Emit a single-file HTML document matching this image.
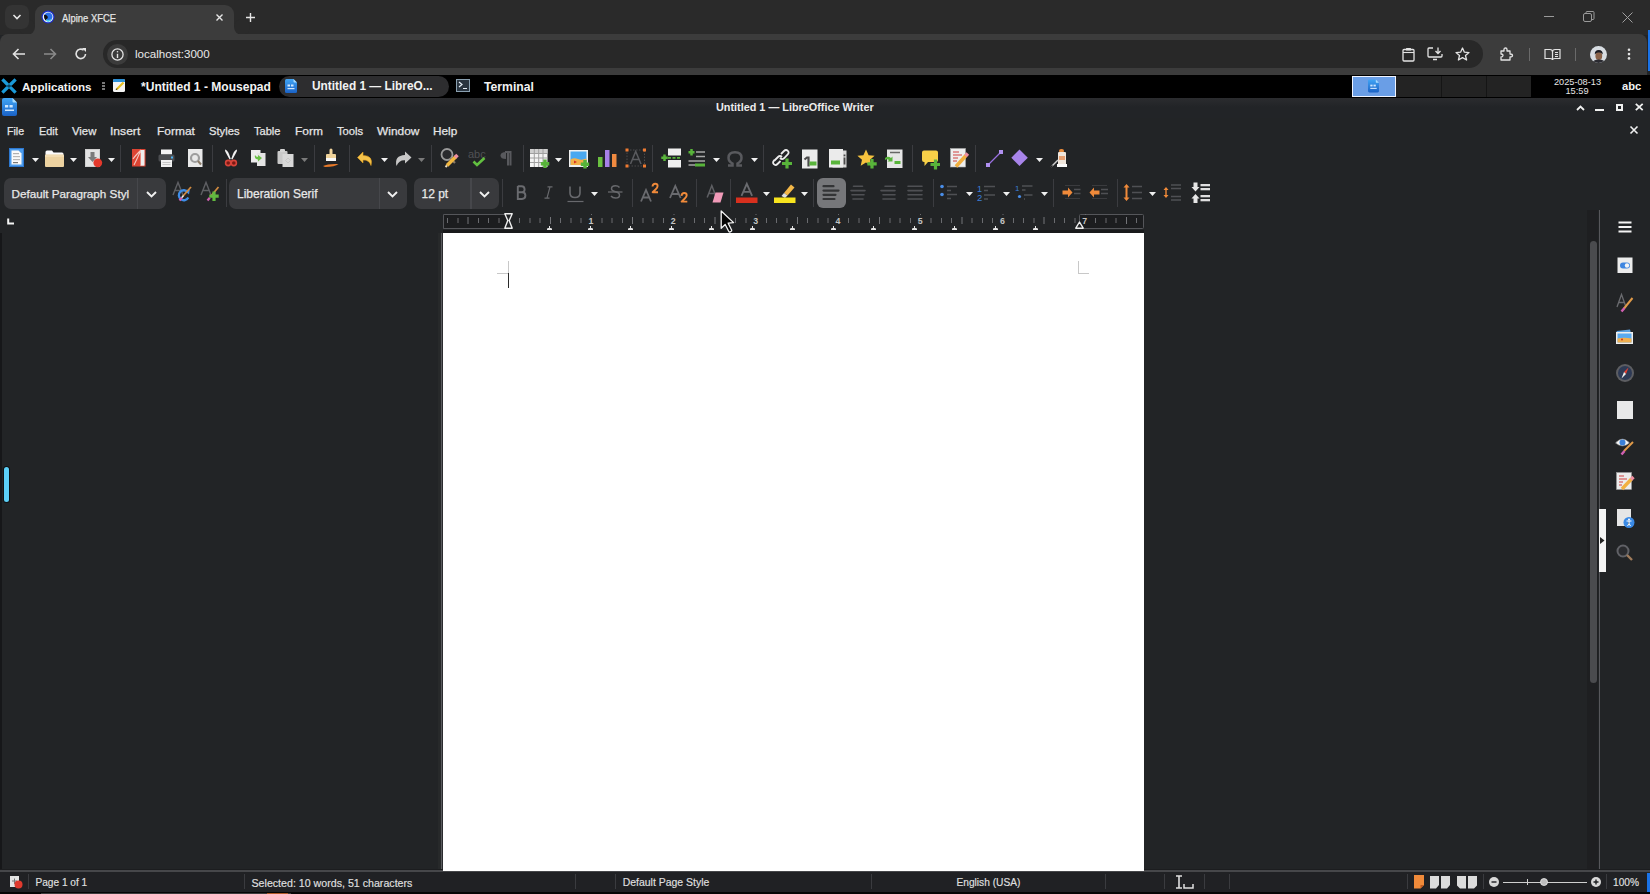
<!DOCTYPE html>
<html><head><meta charset="utf-8">
<style>
*{margin:0;padding:0;box-sizing:border-box}
html,body{width:1650px;height:894px;overflow:hidden;background:#222426;font-family:"Liberation Sans",sans-serif;position:relative}
.a{position:absolute}
.t{position:absolute;white-space:nowrap;line-height:1}
svg{position:absolute;overflow:visible}
</style></head><body>
<!-- ===== Chrome tab strip ===== -->
<div class="a" style="left:0;top:0;width:1650px;height:35px;background:#2a2a2a"></div>
<!-- active tab -->
<div class="a" style="left:35px;top:5px;width:199px;height:32px;border-radius:9px 9px 0 0;background:#3c3c3c"></div>
<div class="a" style="left:27px;top:27px;width:8px;height:8px;background:#3c3c3c"></div>
<div class="a" style="left:19px;top:19px;width:16px;height:16px;border-radius:50%;background:#2a2a2a"></div>
<div class="a" style="left:234px;top:27px;width:8px;height:8px;background:#3c3c3c"></div>
<div class="a" style="left:234px;top:19px;width:16px;height:16px;border-radius:50%;background:#2a2a2a"></div>
<div class="a" style="left:5px;top:5px;width:24px;height:24px;border-radius:7px;background:#343434"></div>
<svg style="left:12px;top:13px" width="10" height="8"><path d="M1.5 2 L5 5.5 L8.5 2" stroke="#e6e6e6" stroke-width="1.6" fill="none"/></svg>
<!-- favicon -->
<svg style="left:41px;top:10px" width="14" height="14"><circle cx="7" cy="7" r="6.5" fill="#1a30d0"/><circle cx="7" cy="7" r="5.3" fill="#f4f4f4"/><circle cx="7.3" cy="6.8" r="4.2" fill="#2a70e8"/><path d="M3 5 Q5 4 7 7 Q6 10 4.5 10.5 Q2.8 8 3 5 Z" fill="#111"/><path d="M5 9 Q8 11 11 8.5 Q10 11.5 7 12 Q5 11.5 5 9 Z" fill="#4ad0f0"/></svg>
<div class="t" style="left:62px;top:13px;font-size:11px;color:#e3e3e3;transform:scaleX(0.86);transform-origin:left;-webkit-text-stroke:0.25px #e3e3e3">Alpine XFCE</div>
<svg style="left:216px;top:14px" width="7" height="7"><path d="M0.5 0.5 L6.5 6.5 M6.5 0.5 L0.5 6.5" stroke="#e6e6e6" stroke-width="1.4"/></svg>
<svg style="left:246px;top:13px" width="9" height="9"><path d="M4.5 0 V9 M0 4.5 H9" stroke="#e6e6e6" stroke-width="1.4"/></svg>
<!-- window controls -->
<div class="a" style="left:1544px;top:16px;width:10px;height:1px;background:#9a9a9a"></div>
<svg style="left:1583px;top:11px" width="12" height="12"><rect x="0.5" y="2.5" width="8" height="8" rx="1.5" stroke="#9a9a9a" fill="none"/><path d="M3 2.5 V1.5 Q3 0.5 4 0.5 H10 Q11 0.5 11 1.5 V7.5 Q11 8.5 10 8.5 H9" stroke="#9a9a9a" fill="none"/></svg>
<svg style="left:1622px;top:12px" width="11" height="11"><path d="M0.5 0.5 L10.5 10.5 M10.5 0.5 L0.5 10.5" stroke="#a0a0a0" stroke-width="1"/></svg>
<!-- ===== Chrome toolbar ===== -->
<div class="a" style="left:0;top:34px;width:1647px;height:41px;background:#3c3c3c;border-radius:8px 8px 0 0"></div>
<div class="a" style="left:1648px;top:30px;width:2px;height:41px;background:#1a73e8"></div>
<svg style="left:12px;top:48px" width="14" height="12"><path d="M13 6 H1.5 M6.5 1 L1.5 6 L6.5 11" stroke="#e3e3e3" stroke-width="1.6" fill="none"/></svg>
<svg style="left:43px;top:48px" width="14" height="12"><path d="M1 6 H12.5 M7.5 1 L12.5 6 L7.5 11" stroke="#8a8a8a" stroke-width="1.6" fill="none"/></svg>
<svg style="left:74px;top:47px" width="14" height="14"><path d="M11.5 7 A4.7 4.7 0 1 1 9.6 3.1" stroke="#e3e3e3" stroke-width="1.6" fill="none"/><path d="M8 1 L12 1 L12 5 Z" fill="#e3e3e3"/></svg>
<!-- omnibox -->
<div class="a" style="left:103px;top:40px;width:1380px;height:28px;border-radius:14px;background:#282828"></div>
<div class="a" style="left:107px;top:44px;width:21px;height:21px;border-radius:50%;background:#3b3b3b"></div>
<svg style="left:111px;top:48px" width="13" height="13"><circle cx="6.5" cy="6.5" r="5.6" stroke="#e3e3e3" stroke-width="1.3" fill="none"/><path d="M6.5 5.8 V10" stroke="#e3e3e3" stroke-width="1.4"/><circle cx="6.5" cy="3.8" r="0.8" fill="#e3e3e3"/></svg>
<div class="t" style="left:135px;top:48px;font-size:11.6px;color:#e8e8e8">localhost:3000</div>
<!-- right icons -->
<svg style="left:1401.5px;top:47px" width="14" height="15"><rect x="1" y="2.5" width="11" height="11.5" rx="1" stroke="#e3e3e3" stroke-width="1.3" fill="none"/><rect x="4" y="1" width="5" height="2.5" rx="0.5" fill="#e3e3e3"/><path d="M1 5.5 H12" stroke="#e3e3e3" stroke-width="1.1"/></svg>
<svg style="left:1427px;top:47px" width="16" height="14"><path d="M6 1 H2 Q1 1 1 2 V9 Q1 10 2 10 H14 Q15 10 15 9 V7" stroke="#e3e3e3" stroke-width="1.3" fill="none"/><path d="M11 0.5 V6 M8.5 4 L11 6.5 L13.5 4" stroke="#e3e3e3" stroke-width="1.3" fill="none"/><path d="M6 12.5 H10" stroke="#e3e3e3" stroke-width="1.5"/></svg>
<svg style="left:1455px;top:47px" width="15" height="14"><path d="M7.5 1 L9.4 5.2 L14 5.6 L10.5 8.6 L11.6 13 L7.5 10.6 L3.4 13 L4.5 8.6 L1 5.6 L5.6 5.2 Z" stroke="#e3e3e3" stroke-width="1.3" fill="none" stroke-linejoin="round"/></svg>
<svg style="left:1499px;top:47px" width="15" height="15"><path d="M2 4 H5 V2.5 Q5 1 6.5 1 Q8 1 8 2.5 V4 H11 V7 Q13.5 7 13.5 8.5 Q13.5 10 11 10 V13 H2 V10 Q4 10 4 8.5 Q4 7 2 7 Z" stroke="#e3e3e3" stroke-width="1.3" fill="none" stroke-linejoin="round"/></svg>
<div class="a" style="left:1529px;top:48px;width:1px;height:13px;background:#6a6a6a"></div>
<svg style="left:1544px;top:48px" width="17" height="13"><path d="M1 1.5 H6 Q8.5 1.5 8.5 4 V12 Q8.5 10.5 6 10.5 H1 Z M16 1.5 H11 Q8.5 1.5 8.5 4 V12 Q8.5 10.5 11 10.5 H16 Z" stroke="#e3e3e3" stroke-width="1.2" fill="none"/><path d="M11 4.5 H14 M11 6.5 H14 M11 8.5 H14" stroke="#e3e3e3" stroke-width="1"/></svg>
<div class="a" style="left:1575px;top:48px;width:1px;height:13px;background:#6a6a6a"></div>
<svg style="left:1590px;top:46px" width="17" height="17"><defs><clipPath id="av"><circle cx="8.5" cy="8.5" r="8.5"/></clipPath></defs><g clip-path="url(#av)"><rect width="17" height="17" fill="#d8dde2"/><ellipse cx="8.8" cy="10" rx="3.4" ry="4.1" fill="#8a6248"/><path d="M4.8 8.5 Q4.5 4 8.8 4 Q13 4 12.7 8.5 Q11 6.2 8.8 6.5 Q6.5 6.2 4.8 8.5 Z" fill="#1c1c22"/><path d="M2 17 Q3 13.5 8.8 13.5 Q14.5 13.5 15.5 17 Z" fill="#2a2a30"/></g></svg>
<svg style="left:1627.3px;top:48px" width="4" height="14"><circle cx="2" cy="1.8" r="1.3" fill="#e3e3e3"/><circle cx="2" cy="6.1" r="1.3" fill="#e3e3e3"/><circle cx="2" cy="10.4" r="1.3" fill="#e3e3e3"/></svg>
<!-- ===== XFCE panel ===== -->
<div class="a" style="left:0;top:75px;width:1650px;height:23px;background:#000"></div>
<svg style="left:2px;top:79px" width="14" height="14"><path d="M1.5 1.5 L5 5 M12.5 1.5 L9 5 M1.5 12.5 L5 9 M12.5 12.5 L9 9" stroke="#1b9ad8" stroke-width="3.2" stroke-linecap="square"/><path d="M4 7 H10" stroke="#0d5b85" stroke-width="1.5"/></svg>
<div class="t" style="left:22px;top:80.5px;font-size:11.6px;font-weight:700;color:#f2f2f2">Applications</div>
<div class="a" style="left:102px;top:82px;width:3px;height:2px;background:#777"></div>
<div class="a" style="left:102px;top:85px;width:3px;height:2px;background:#777"></div>
<div class="a" style="left:102px;top:88px;width:3px;height:2px;background:#777"></div>
<div class="a" style="left:113px;top:79px;width:12px;height:13px;border-radius:1.5px;background:#f4f4f4"></div>
<div class="a" style="left:113px;top:79px;width:12px;height:3px;border-radius:1.5px 1.5px 0 0;background:#2a90d8"></div>
<svg style="left:115px;top:81px" width="10" height="10"><path d="M1.5 8.5 L8.5 1.5" stroke="#e8c020" stroke-width="2.2"/><path d="M1 9 L2 7.5" stroke="#333" stroke-width="1"/></svg>
<div class="t" style="left:141px;top:80.5px;font-size:12.05px;font-weight:700;color:#f2f2f2">*Untitled 1 - Mousepad</div>
<div class="a" style="left:279px;top:76px;width:170px;height:21px;border-radius:10.5px;background:#2d2d2f"></div>
<svg style="left:285px;top:79px" width="12" height="14" viewBox="0 0 12 14"><defs><linearGradient id="ga" x1="0" y1="0" x2="0" y2="1"><stop offset="0" stop-color="#41a5f5"/><stop offset="1" stop-color="#1a62c6"/></linearGradient></defs><path d="M1.5 0 H8.5 L12 3.5 V12.5 Q12 14 10.5 14 H1.5 Q0 14 0 12.5 V1.5 Q0 0 1.5 0 Z" fill="url(#ga)"/><path d="M8.5 0 L12 3.5 H9.5 Q8.5 3.5 8.5 2.5 Z" fill="#a8dcff"/><rect x="2.5" y="5.5" width="2.5" height="2" fill="#cfe8ff"/><rect x="6" y="5.5" width="2.5" height="2" fill="#cfe8ff"/><rect x="2.5" y="9" width="7" height="1.2" fill="#cfe8ff"/></svg>
<div class="t" style="left:312px;top:80.5px;font-size:11.86px;font-weight:700;color:#f2f2f2">Untitled 1 — LibreO...</div>
<div class="a" style="left:456px;top:79px;width:14px;height:13px;background:#2a3540;border:1px solid #8aa0b0"></div>
<svg style="left:458px;top:81px" width="10" height="9"><path d="M1 1 L4 3.5 L1 6 M5 7.5 H9" stroke="#e8f0f8" stroke-width="1.2" fill="none"/></svg>
<div class="t" style="left:484px;top:80.5px;font-size:12.2px;font-weight:700;color:#f2f2f2">Terminal</div>
<!-- pager -->
<div class="a" style="left:1352px;top:76px;width:44px;height:21px;background:#6a9ee6;border:1px solid #f0f4ff"></div>
<svg style="left:1368px;top:79px" width="11" height="14" viewBox="0 0 12 14"><defs><linearGradient id="gb" x1="0" y1="0" x2="0" y2="1"><stop offset="0" stop-color="#41a5f5"/><stop offset="1" stop-color="#1a62c6"/></linearGradient></defs><path d="M1.5 0 H8.5 L12 3.5 V12.5 Q12 14 10.5 14 H1.5 Q0 14 0 12.5 V1.5 Q0 0 1.5 0 Z" fill="url(#gb)"/><path d="M8.5 0 L12 3.5 H9.5 Q8.5 3.5 8.5 2.5 Z" fill="#a8dcff"/><rect x="2.5" y="5.5" width="2.5" height="2" fill="#cfe8ff"/><rect x="6" y="5.5" width="2.5" height="2" fill="#cfe8ff"/><rect x="2.5" y="9" width="7" height="1.2" fill="#cfe8ff"/></svg>
<div class="a" style="left:1396px;top:76px;width:135px;height:21px;background:#232323"></div>
<div class="a" style="left:1441px;top:76px;width:1px;height:21px;background:#151515"></div>
<div class="a" style="left:1486px;top:76px;width:1px;height:21px;background:#151515"></div>
<div class="t" style="left:1554px;top:77.5px;font-size:9.2px;color:#e6e6e6;text-align:center;width:46px;line-height:9.5px">2025-08-13<br>15:59</div>
<div class="t" style="left:1622px;top:81px;font-size:11.2px;font-weight:700;color:#f2f2f2">abc</div><div class="a" style="left:0px;top:98px;width:1650px;height:20px;background:linear-gradient(#2b2c2f,#222427 9px);"></div>
<div class="t" style="left:716px;top:102px;font-size:10.85px;font-weight:700;color:#ececec;">Untitled 1 — LibreOffice Writer</div>
<svg style="left:2px;top:98px" width="15" height="18" viewBox="0 0 15 18"><defs><linearGradient id="gt" x1="0" y1="0" x2="0" y2="1"><stop offset="0" stop-color="#41a5f5"/><stop offset="1" stop-color="#1a62c6"/></linearGradient></defs><path d="M2 0 H10.5 L15 4.5 V16 Q15 18 13 18 H2 Q0 18 0 16 V2 Q0 0 2 0 Z" fill="url(#gt)"/><path d="M10.5 0 L15 4.5 H11.5 Q10.5 4.5 10.5 3.5 Z" fill="#a8dcff"/><rect x="3" y="7" width="3.2" height="2.5" fill="#cfe8ff"/><rect x="7.5" y="7" width="3.2" height="2.5" fill="#cfe8ff"/><rect x="3" y="11.5" width="9" height="1.5" fill="#cfe8ff"/></svg>
<svg style="left:1575.5px;top:104.5px" width="9" height="6" viewBox="0 0 9 6"><path d="M1 5 L4.5 1.5 L8 5" stroke="#f0f0f0" stroke-width="1.8" fill="none"/></svg>
<div class="a" style="left:1595px;top:109px;width:9px;height:2px;background:#f0f0f0;"></div>
<svg style="left:1616px;top:104px" width="7" height="7" viewBox="0 0 7 7"><rect x="1" y="1" width="5" height="5" stroke="#f0f0f0" stroke-width="2" fill="none"/></svg>
<svg style="left:1635px;top:103px" width="8.5" height="8" viewBox="0 0 8.5 8"><path d="M0.8 0.8 L7.7 7.2 M7.7 0.8 L0.8 7.2" stroke="#f0f0f0" stroke-width="1.8"/></svg>
<div class="t" style="left:7.1px;top:126px;font-size:11.8px;font-weight:400;color:#e6e6e6;transform:scaleX(0.898);transform-origin:left;-webkit-text-stroke:0.25px #e6e6e6">File</div>
<div class="t" style="left:39px;top:126px;font-size:11.8px;font-weight:400;color:#e6e6e6;transform:scaleX(0.924);transform-origin:left;-webkit-text-stroke:0.25px #e6e6e6">Edit</div>
<div class="t" style="left:72px;top:126px;font-size:11.8px;font-weight:400;color:#e6e6e6;transform:scaleX(0.958);transform-origin:left;-webkit-text-stroke:0.25px #e6e6e6">View</div>
<div class="t" style="left:110.2px;top:126px;font-size:11.8px;font-weight:400;color:#e6e6e6;transform:scaleX(1.025);transform-origin:left;-webkit-text-stroke:0.25px #e6e6e6">Insert</div>
<div class="t" style="left:156.7px;top:126px;font-size:11.8px;font-weight:400;color:#e6e6e6;transform:scaleX(1.014);transform-origin:left;-webkit-text-stroke:0.25px #e6e6e6">Format</div>
<div class="t" style="left:208.8px;top:126px;font-size:11.8px;font-weight:400;color:#e6e6e6;transform:scaleX(0.949);transform-origin:left;-webkit-text-stroke:0.25px #e6e6e6">Styles</div>
<div class="t" style="left:253.5px;top:126px;font-size:11.8px;font-weight:400;color:#e6e6e6;transform:scaleX(0.939);transform-origin:left;-webkit-text-stroke:0.25px #e6e6e6">Table</div>
<div class="t" style="left:294.8px;top:126px;font-size:11.8px;font-weight:400;color:#e6e6e6;transform:scaleX(1.014);transform-origin:left;-webkit-text-stroke:0.25px #e6e6e6">Form</div>
<div class="t" style="left:337px;top:126px;font-size:11.8px;font-weight:400;color:#e6e6e6;transform:scaleX(0.951);transform-origin:left;-webkit-text-stroke:0.25px #e6e6e6">Tools</div>
<div class="t" style="left:376.9px;top:126px;font-size:11.8px;font-weight:400;color:#e6e6e6;transform:scaleX(1.010);transform-origin:left;-webkit-text-stroke:0.25px #e6e6e6">Window</div>
<div class="t" style="left:433px;top:126px;font-size:11.8px;font-weight:400;color:#e6e6e6;transform:scaleX(0.997);transform-origin:left;-webkit-text-stroke:0.25px #e6e6e6">Help</div>
<svg style="left:1630px;top:126px" width="8" height="8" viewBox="0 0 8 8"><path d="M0.5 0.5 L7.5 7.5 M7.5 0.5 L0.5 7.5" stroke="#f0f0f0" stroke-width="1.6"/></svg>
<svg style="left:9px;top:148px" width="15" height="19" viewBox="0 0 15 19"><rect x="0.5" y="0.5" width="14" height="18" fill="#4d9cec" stroke="#2d78d0"/><path d="M2.5 2.5 H9.5 L12.5 5.5 V16.5 H2.5 Z" fill="#fafafa"/><rect x="4" y="5" width="6" height="1.2" fill="#b0b0b0"/><rect x="4" y="8" width="7" height="1.2" fill="#b8b8b8"/><rect x="4" y="11" width="7" height="1.2" fill="#b8b8b8"/><rect x="4" y="14" width="5" height="1.2" fill="#777"/></svg>
<svg style="left:32.3px;top:157.5px" width="7" height="4" viewBox="0 0 7 4"><path d="M0 0 H7 L3.5 4 Z" fill="#f0f0f0"/></svg>
<svg style="left:45px;top:150px" width="19" height="17" viewBox="0 0 19 17"><path d="M0.5 2 Q0.5 0.5 2 0.5 H7 L8.5 2.5 H17 Q18.5 2.5 18.5 4 V6 H0.5 Z" fill="#fbfbfb"/><rect x="0" y="4.5" width="19" height="12.5" rx="1" fill="#ecd2a0"/><path d="M0 6 H19" stroke="#f7e6c4" stroke-width="1"/></svg>
<svg style="left:69.8px;top:157.5px" width="7" height="4" viewBox="0 0 7 4"><path d="M0 0 H7 L3.5 4 Z" fill="#f0f0f0"/></svg>
<svg style="left:84.5px;top:149px" width="18" height="19" viewBox="0 0 18 19"><rect x="0" y="0" width="15" height="18" fill="#e3e3e3"/><rect x="0.5" y="0.5" width="14" height="17" fill="none" stroke="#cfcfcf"/><path d="M5.5 3 H9.5 V8 H12 L7.5 13 L3 8 H5.5 Z" fill="#7b7b7b"/><circle cx="12.8" cy="13.8" r="4.4" fill="#e3392c"/></svg>
<svg style="left:107.6px;top:157.5px" width="7" height="4" viewBox="0 0 7 4"><path d="M0 0 H7 L3.5 4 Z" fill="#f0f0f0"/></svg>
<div class="a" style="left:120px;top:145px;width:1px;height:27px;background:#3b3c40;"></div>
<svg style="left:131.5px;top:149px" width="14" height="18" viewBox="0 0 14 18"><rect x="0" y="0" width="13.5" height="17.5" fill="#dc4433"/><path d="M9 1 Q3 7 1 10 M9 1 Q5 10 2 16 M9 1 V17 M11 1 V17" stroke="#f4c7c0" stroke-width="1.1" fill="none"/><rect x="9" y="1" width="3.5" height="15.5" fill="#eeeeee"/></svg>
<svg style="left:158px;top:149px" width="17" height="19" viewBox="0 0 17 19"><rect x="3" y="0.5" width="11" height="5" fill="#f4f4f4"/><rect x="0.5" y="5.5" width="16" height="7" rx="1.5" fill="#4b4d50"/><rect x="13" y="7.5" width="2" height="2" fill="#4ab0f0"/><rect x="3" y="11" width="11" height="7" fill="#f2f2f2"/><path d="M4.5 13.5 H12.5 M4.5 15.5 H12.5" stroke="#bbb" stroke-width="0.8"/></svg>
<svg style="left:187.5px;top:149px" width="15" height="19" viewBox="0 0 15 19"><rect x="0" y="0" width="14.5" height="18" fill="#e9e9e9"/><circle cx="7" cy="9" r="4" fill="none" stroke="#9e9e9e" stroke-width="2.2"/><path d="M10 12 L13 15.5" stroke="#8a7a66" stroke-width="2"/></svg>
<div class="a" style="left:212px;top:145px;width:1px;height:27px;background:#3b3c40;"></div>
<svg style="left:223.5px;top:148px" width="14" height="20" viewBox="0 0 14 20"><path d="M1 1.5 Q3.5 2 5 6 L6.8 11 L5.6 11.5 L2 5 Q0.8 3 1 1.5 Z M13 1.5 Q10.5 2 9 6 L7.2 11 L8.4 11.5 L12 5 Q13.2 3 13 1.5 Z" fill="#f2f2f2"/><circle cx="4.2" cy="15" r="2.6" fill="#7a1a14" stroke="#d8443a" stroke-width="1.6"/><circle cx="9.8" cy="15" r="2.6" fill="#7a1a14" stroke="#d8443a" stroke-width="1.6"/></svg>
<svg style="left:251px;top:150px" width="15" height="17" viewBox="0 0 15 17"><rect x="0" y="0" width="9.5" height="12.5" fill="#ececec"/><rect x="6" y="3" width="8.5" height="13" fill="#e4e4e4"/><path d="M4 5 Q3 9 7 9.5 V11.5 L11 8 L7 5 V7 Q5 7 4 5 Z" fill="#6ac046"/></svg>
<svg style="left:277px;top:148px" width="17" height="20" viewBox="0 0 17 20"><rect x="0.5" y="3" width="10" height="13" rx="1" fill="#c9c9c9"/><rect x="3" y="1" width="5" height="3" rx="1" fill="#d4d4d4"/><rect x="5.5" y="6" width="11" height="13" fill="#d8d8d8"/><path d="M8.5 12.5 L11 10 L13.5 12.5 L11 15 Z" fill="none" stroke="#c4c4c4" stroke-width="0.8"/></svg>
<svg style="left:301.0px;top:157.5px" width="7" height="4" viewBox="0 0 7 4"><path d="M0 0 H7 L3.5 4 Z" fill="#7a7a7a"/></svg>
<div class="a" style="left:314px;top:145px;width:1px;height:27px;background:#3b3c40;"></div>
<svg style="left:322px;top:148px" width="18" height="20" viewBox="0 0 18 20"><rect x="7.5" y="0.5" width="3" height="7" rx="1.5" fill="#f0d49c"/><rect x="4" y="6" width="10" height="5" rx="1" fill="#efd39a"/><rect x="4" y="10" width="10" height="3" fill="#fafafa"/><path d="M1 18 Q6 15.5 16.5 16 Q13 19 3 19 Z" fill="#e87a2a"/></svg>
<div class="a" style="left:349px;top:145px;width:1px;height:27px;background:#3b3c40;"></div>
<svg style="left:356.5px;top:150.5px" width="17" height="17" viewBox="0 0 17 17"><path d="M6 1 L0.5 6.5 L6 12 V9 Q12 8.5 14 14.5 Q16.5 4.5 6 4.5 Z" fill="#f4c24a" stroke="#e0a020" stroke-width="0.6" stroke-linejoin="round"/></svg>
<svg style="left:380.5px;top:157.5px" width="7" height="4" viewBox="0 0 7 4"><path d="M0 0 H7 L3.5 4 Z" fill="#f0f0f0"/></svg>
<svg style="left:394px;top:150.5px" width="18" height="17" viewBox="0 0 18 17"><path d="M11 0.5 L17.5 6.5 L11 12.5 V9.2 Q5 8.8 2.5 15 Q0 4.5 11 4 Z" fill="#c8c8c8" stroke-linejoin="round"/></svg>
<svg style="left:418.3px;top:157.5px" width="7" height="4" viewBox="0 0 7 4"><path d="M0 0 H7 L3.5 4 Z" fill="#7a7a7a"/></svg>
<div class="a" style="left:431px;top:145px;width:1px;height:27px;background:#3b3c40;"></div>
<svg style="left:440px;top:148px" width="21" height="20" viewBox="0 0 21 20"><circle cx="7" cy="6.5" r="5.5" fill="#2a2b2e" stroke="#9a9a9a" stroke-width="1.8"/><path d="M10 10 L15 15" stroke="#8a7a66" stroke-width="2.2"/><path d="M7 17.5 L16 8.5" stroke="#f2b840" stroke-width="3.5"/><path d="M15 9.5 L17.5 7" stroke="#ee8fa0" stroke-width="3.5"/><path d="M5.5 19 L7 17.5" stroke="#f4e0c0" stroke-width="2"/></svg>
<svg style="left:468px;top:149px" width="20" height="18" viewBox="0 0 20 18"><text x="0" y="9" font-family="Liberation Sans" font-size="11" fill="#505155">abc</text><path d="M5.5 12.5 L9 16 L16.5 9" stroke="#62c040" stroke-width="2.6" fill="none"/></svg>
<svg style="left:500px;top:151px" width="11" height="15" viewBox="0 0 11 15"><path d="M5 1 H10.5 V14.5 M8 1 V14.5" stroke="#58595d" stroke-width="2" fill="none"/><path d="M6 1 Q0.5 1 0.5 4.5 Q0.5 8 6 8 Z" fill="#58595d"/></svg>
<div class="a" style="left:523px;top:145px;width:1px;height:27px;background:#3b3c40;"></div>
<svg style="left:530px;top:149px" width="20" height="19" viewBox="0 0 20 19"><rect x="0" y="0" width="17.5" height="18" fill="#f4f4f4"/><rect x="0" y="0" width="17.5" height="4" fill="#cfcfcf"/><path d="M0 4.5 H17.5 M0 9 H17.5 M0 13.5 H17.5 M4.3 0 V18 M8.7 0 V18 M13 0 V18" stroke="#a0a0a0" stroke-width="1"/><path d="M15 10.5 V19 M10.8 14.7 H19.3" stroke="#58b43a" stroke-width="3.4"/></svg>
<svg style="left:554.9px;top:157.5px" width="7" height="4" viewBox="0 0 7 4"><path d="M0 0 H7 L3.5 4 Z" fill="#f0f0f0"/></svg>
<svg style="left:569px;top:149.5px" width="21" height="19" viewBox="0 0 21 19"><rect x="0" y="0" width="19" height="17" fill="#f0f0f0"/><rect x="1.5" y="1.5" width="16" height="13.5" fill="#4aa8f0"/><path d="M1.5 9.5 Q5 7.5 9 9 Q13 10.5 17.5 8.5 V15 H1.5 Z" fill="#f4b048"/><path d="M5 10.5 L8 12 L5 13.5 Z" fill="#d83020"/><path d="M16 10 V18.5 M11.8 14.2 H20.2" stroke="#58b43a" stroke-width="3.4"/></svg>
<svg style="left:597.5px;top:149px" width="19" height="18" viewBox="0 0 19 18"><rect x="0" y="8" width="4.5" height="10" fill="#6ac040"/><rect x="7" y="1" width="4.5" height="17" fill="#a680e8"/><rect x="14" y="5" width="4.5" height="13" fill="#f08a40"/></svg>
<svg style="left:624.5px;top:148px" width="22" height="20" viewBox="0 0 22 20"><rect x="2" y="2" width="17.5" height="16" fill="none" stroke="#555" stroke-width="0.8" stroke-dasharray="1.5 1.5"/><rect x="0.5" y="0.5" width="3" height="3" fill="#f07a30"/><rect x="18" y="0.5" width="3" height="3" fill="#f07a30"/><rect x="0.5" y="16.5" width="3" height="3" fill="#f07a30"/><rect x="18" y="16.5" width="3" height="3" fill="#f07a30"/><path d="M5.5 16 L10.7 3.5 L16 16 M7.5 11.5 H14" stroke="#5a5b5f" stroke-width="1.5" fill="none"/></svg>
<div class="a" style="left:652px;top:145px;width:1px;height:27px;background:#3b3c40;"></div>
<svg style="left:660.5px;top:148px" width="21" height="20" viewBox="0 0 21 20"><rect x="7" y="0.5" width="13" height="7" fill="#efefef"/><rect x="7" y="12" width="13" height="7.5" fill="#efefef"/><path d="M7 9.8 H20" stroke="#58b43a" stroke-width="1.8" stroke-dasharray="3 1.5"/><path d="M3.5 6.5 V13 M0.3 9.8 H6.7" stroke="#58b43a" stroke-width="2.5"/></svg>
<svg style="left:688px;top:148px" width="18" height="20" viewBox="0 0 18 20"><path d="M3.5 1 V7.5 M0.5 4.2 H6.5" stroke="#58b43a" stroke-width="2.5"/><path d="M8 4 H17 M8 8.5 H17 M0.5 13 H17" stroke="#a8a8a8" stroke-width="1.5"/><rect x="7" y="15.5" width="10" height="3" fill="#58b43a"/><path d="M0.5 17 H7" stroke="#a8a8a8" stroke-width="1.5"/></svg>
<svg style="left:713.0px;top:157.5px" width="7" height="4" viewBox="0 0 7 4"><path d="M0 0 H7 L3.5 4 Z" fill="#f0f0f0"/></svg>
<svg style="left:727px;top:150.5px" width="16" height="16" viewBox="0 0 16 16"><path d="M1 14.5 H5.5 V12.5 Q1.5 10.5 1.5 6.8 Q1.5 1.3 8 1.3 Q14.5 1.3 14.5 6.8 Q14.5 10.5 10.5 12.5 V14.5 H15" stroke="#595a5e" stroke-width="2.5" fill="none"/></svg>
<svg style="left:750.8px;top:157.5px" width="7" height="4" viewBox="0 0 7 4"><path d="M0 0 H7 L3.5 4 Z" fill="#f0f0f0"/></svg>
<div class="a" style="left:763px;top:145px;width:1px;height:27px;background:#3b3c40;"></div>
<svg style="left:772px;top:149px" width="20" height="20" viewBox="0 0 20 20"><path d="M2.5 11.5 L6 8 Q8 6 10 8 M8.5 12 L5.5 15 Q3.5 17 1.8 15.2 Q0 13.4 2.5 11 M9 5 L12 2 Q14 0 15.8 1.8 Q17.6 3.6 15.5 5.7 L12 9.3 Q10 11 8 9" stroke="#ececec" stroke-width="1.8" fill="none"/><path d="M15 9.5 V19.5 M10 14.5 H20" stroke="#58b43a" stroke-width="3.2"/></svg>
<svg style="left:802px;top:149px" width="16" height="20" viewBox="0 0 16 20"><rect x="0" y="0.5" width="15.5" height="19" fill="#ebebeb"/><path d="M2.5 10.5 L5 8.5 H6.5 V17.5" stroke="#4a4a4a" stroke-width="2.2" fill="none"/><rect x="7.5" y="12.5" width="7" height="4" fill="#58b43a"/></svg>
<svg style="left:829px;top:149px" width="18" height="20" viewBox="0 0 18 20"><rect x="3.5" y="1.5" width="14" height="17" fill="#d8d8d8"/><rect x="0" y="0" width="14" height="18.5" fill="#ebebeb"/><rect x="2" y="11.5" width="9" height="4" fill="#58b43a"/><path d="M15.5 8.5 V15.5" stroke="#4a4a4a" stroke-width="1.8"/><rect x="14.6" y="5.5" width="1.8" height="1.8" fill="#4a4a4a"/></svg>
<svg style="left:856.5px;top:149px" width="20" height="20" viewBox="0 0 20 20"><path d="M9 0.5 L11.6 6.2 L17.6 6.8 L13 10.8 L14.3 16.8 L9 13.6 L3.7 16.8 L5 10.8 L0.4 6.8 L6.4 6.2 Z" fill="#f6c23e"/><path d="M15 10 V19.5 M10.3 14.8 H19.7" stroke="#58b43a" stroke-width="3.2"/></svg>
<svg style="left:885px;top:149px" width="18" height="20" viewBox="0 0 18 20"><rect x="2" y="0.5" width="15.5" height="18.5" fill="#e6e6e6"/><path d="M5 3.5 H15" stroke="#666" stroke-width="1.5"/><rect x="9.5" y="12" width="6" height="3" fill="#58b43a"/><path d="M0 9 Q3 6.5 6 9 L7.5 7.5 V12.5 H2.5 L4 11 Q2 9.5 0 11 Z" fill="#58b43a"/></svg>
<div class="a" style="left:912px;top:145px;width:1px;height:27px;background:#3b3c40;"></div>
<svg style="left:921px;top:149.5px" width="19" height="20" viewBox="0 0 19 20"><path d="M1 2.5 Q1 0.5 3 0.5 H15 Q17 0.5 17 2.5 V10 Q17 12 15 12 H7 L3.5 16 V12 H3 Q1 12 1 10 Z" fill="#f8d048"/><path d="M14.5 9.5 V19.5 M9.5 14.5 H19" stroke="#58b43a" stroke-width="3.2"/></svg>
<svg style="left:950px;top:148px" width="19" height="20" viewBox="0 0 19 20"><rect x="0.5" y="0.5" width="15" height="18.5" fill="#eeeeee" stroke="#aaa" stroke-width="0.6"/><path d="M3 4 H9 M3 7 H12 M3 10 H8 M3 13 H7" stroke="#d04040" stroke-width="1.1"/><path d="M6 18.5 L16 7.5" stroke="#f2b040" stroke-width="3.6"/><path d="M15.5 8 L17.8 5.5" stroke="#ee8fa0" stroke-width="3.6"/></svg>
<div class="a" style="left:975px;top:145px;width:1px;height:27px;background:#3b3c40;"></div>
<svg style="left:986px;top:149.5px" width="17" height="17" viewBox="0 0 17 17"><path d="M2 15 L15 2" stroke="#9a70e0" stroke-width="1.3"/><rect x="0" y="13" width="4" height="4" fill="#b090f0"/><rect x="13" y="0" width="4" height="4" fill="#b090f0"/></svg>
<svg style="left:1011px;top:148.8px" width="18" height="18" viewBox="0 0 18 18"><path d="M8.5 0.5 L16.8 8.8 L8.5 17 L0.3 8.8 Z" fill="#a884ea"/></svg>
<svg style="left:1035.5px;top:157.5px" width="7" height="4" viewBox="0 0 7 4"><path d="M0 0 H7 L3.5 4 Z" fill="#f0f0f0"/></svg>
<svg style="left:1050px;top:148px" width="20" height="21" viewBox="0 0 20 21"><rect x="9" y="1" width="5" height="4" rx="2" fill="#e88a3a"/><rect x="8" y="4" width="8" height="13" rx="1" fill="#f0e6dc"/><rect x="9" y="8" width="6" height="4" fill="#e8a070"/><rect x="7" y="16" width="10" height="3" fill="#fafafa"/><path d="M1 19 L8 12" stroke="#cfcfcf" stroke-width="1.4"/><path d="M0.5 19.5 L2.5 17.5" stroke="#222" stroke-width="1.5"/></svg>
<div class="a" style="left:3.5px;top:178px;width:162.0px;height:30.5px;background:#393a3d;border-radius:7px"></div>
<div class="a" style="left:136.5px;top:178px;width:1.5px;height:30.5px;background:#46474b;"></div>
<svg style="left:145.5px;top:190.5px" width="11" height="7" viewBox="0 0 11 7"><path d="M1 1 L5.5 5.5 L10 1" stroke="#f0f0f0" stroke-width="1.9" fill="none"/></svg>
<div class="t" style="left:11.5px;top:187.5px;font-size:11.7px;font-weight:400;color:#e8e8e8;transform:scaleX(1.0);transform-origin:left;-webkit-text-stroke:0.25px #e8e8e8">Default Paragraph Styl</div>
<div class="a" style="left:229px;top:178px;width:178px;height:30.5px;background:#393a3d;border-radius:7px"></div>
<div class="a" style="left:378.5px;top:178px;width:1.5px;height:30.5px;background:#46474b;"></div>
<svg style="left:386.5px;top:190.5px" width="11" height="7" viewBox="0 0 11 7"><path d="M1 1 L5.5 5.5 L10 1" stroke="#f0f0f0" stroke-width="1.9" fill="none"/></svg>
<div class="t" style="left:237px;top:187.5px;font-size:11.98px;font-weight:400;color:#e8e8e8;transform:scaleX(1.0);transform-origin:left;-webkit-text-stroke:0.25px #e8e8e8">Liberation Serif</div>
<div class="a" style="left:413.5px;top:178px;width:85.0px;height:30.5px;background:#393a3d;border-radius:7px"></div>
<div class="a" style="left:470px;top:178px;width:1.5px;height:30.5px;background:#46474b;"></div>
<svg style="left:478.5px;top:190.5px" width="11" height="7" viewBox="0 0 11 7"><path d="M1 1 L5.5 5.5 L10 1" stroke="#f0f0f0" stroke-width="1.9" fill="none"/></svg>
<div class="t" style="left:421.5px;top:187.5px;font-size:12px;font-weight:400;color:#e8e8e8;transform:scaleX(1.0);transform-origin:left;-webkit-text-stroke:0.25px #e8e8e8">12 pt</div>
<svg style="left:171.5px;top:181px" width="21" height="22" viewBox="0 0 21 22"><path d="M1 14 L6 1.5 L11 14 M3 9.5 H9" stroke="#5e5f63" stroke-width="1.4" fill="none"/><path d="M15.8 11.2 A5 5 0 1 0 16.3 16.5" stroke="#3e8ee8" stroke-width="2.3" fill="none"/><path d="M12.5 9.5 L17.8 8.5 L17 13.5 Z" fill="#3e8ee8"/><path d="M19 6 L11 15" stroke="#d08a40" stroke-width="1.8"/><path d="M11.5 14.5 L9.5 17" stroke="#e8e8e8" stroke-width="1.5"/><path d="M9.8 16.8 L7.5 19.5" stroke="#d060b0" stroke-width="2.2"/></svg>
<svg style="left:200px;top:181px" width="21" height="22" viewBox="0 0 21 22"><path d="M1 14 L6 1.5 L11 14 M3 9.5 H9" stroke="#5e5f63" stroke-width="1.4" fill="none"/><path d="M18.5 6 L11 15" stroke="#d08a40" stroke-width="1.8"/><path d="M9.8 16.8 L7.5 19.5" stroke="#d060b0" stroke-width="2.2"/><path d="M14 10.5 V20 M9.3 15.2 H18.7" stroke="#62b840" stroke-width="3.2"/></svg>
<div class="a" style="left:226px;top:179px;width:1px;height:28px;background:#3b3c40;"></div>
<div class="a" style="left:502px;top:179px;width:1px;height:28px;background:#3b3c40;"></div>
<svg style="left:516px;top:185px" width="11" height="16" viewBox="0 0 11 16"><path d="M1.8 1.2 H5.5 Q8.6 1.2 8.6 4.5 Q8.6 7.3 5.5 7.3 H1.8 M1.8 7.3 H6 Q9.4 7.3 9.4 10.6 Q9.4 14 6 14 H1.8 Z M1.8 1 V14" stroke="#6a6b6f" stroke-width="1.9" fill="none"/></svg>
<svg style="left:544px;top:186px" width="9" height="13" viewBox="0 0 9 13"><path d="M3.5 0.8 H8.5 M0.5 12.2 H5.5 M6 0.8 L3 12.2" stroke="#68696d" stroke-width="1.2" fill="none"/></svg>
<svg style="left:567px;top:186px" width="17" height="17" viewBox="0 0 17 17"><path d="M3 0.5 V7 Q3 11.5 8 11.5 Q13 11.5 13 7 V0.5" stroke="#68696d" stroke-width="1.6" fill="none"/><path d="M0.5 15.5 H16.5" stroke="#68696d" stroke-width="1.2"/></svg>
<svg style="left:591.0px;top:192px" width="7" height="4" viewBox="0 0 7 4"><path d="M0 0 H7 L3.5 4 Z" fill="#f0f0f0"/></svg>
<svg style="left:607.5px;top:185px" width="15" height="14" viewBox="0 0 15 14"><path d="M11.5 2.5 Q10 0.8 7.5 0.8 Q3.5 0.8 3.5 3.8 Q3.5 6 7.5 6.8 Q11.5 7.6 11.5 10.2 Q11.5 13 7.5 13 Q4.5 13 3 11" stroke="#68696d" stroke-width="1.5" fill="none"/><path d="M0 7 H14.5" stroke="#68696d" stroke-width="1.3"/></svg>
<div class="a" style="left:632px;top:179px;width:1px;height:28px;background:#3b3c40;"></div>
<svg style="left:640px;top:183px" width="20" height="20" viewBox="0 0 20 20"><path d="M1 18.5 L6 7 L11 18.5 M2.8 14.5 H9.2" stroke="#6a6b6f" stroke-width="1.8" fill="none"/><path d="M12.5 3.5 Q12.8 0.8 15.2 0.8 Q17.6 0.8 17.6 3 Q17.6 4.8 15.5 6.5 L12.6 9.2 H18" stroke="#f08a3a" stroke-width="1.9" fill="none" stroke-linejoin="round"/></svg>
<svg style="left:669px;top:183px" width="21" height="21" viewBox="0 0 21 21"><path d="M1 15 L6.3 3 L11.6 15 M2.8 11 H9.8" stroke="#6a6b6f" stroke-width="1.8" fill="none"/><path d="M12.5 12.8 Q12.8 10 15.2 10 Q17.7 10 17.7 12.3 Q17.7 14 15.6 15.8 L12.6 18.6 H18.3" stroke="#f08a3a" stroke-width="1.9" fill="none" stroke-linejoin="round"/></svg>
<div class="a" style="left:696px;top:179px;width:1px;height:28px;background:#3b3c40;"></div>
<svg style="left:706px;top:184px" width="19" height="20" viewBox="0 0 19 20"><path d="M1.2 13.5 L5.8 1.5 L10.4 13.5 M2.8 9.5 H8.8" stroke="#5e5f63" stroke-width="1.5" fill="none"/><path d="M9.5 8.5 H17.5 L14.5 18.5 H6.5 Z" fill="#f09ab8"/></svg>
<div class="a" style="left:730px;top:179px;width:1px;height:28px;background:#3b3c40;"></div>
<svg style="left:736px;top:183px" width="22" height="21" viewBox="0 0 22 21"><path d="M5.5 12.8 L10.8 0.8 L16.1 12.8 M7.4 8.8 H14.2" stroke="#6a6b6f" stroke-width="1.8" fill="none"/><rect x="0" y="14.5" width="21.5" height="5.5" fill="#d8301e"/></svg>
<svg style="left:762.5px;top:192px" width="7" height="4" viewBox="0 0 7 4"><path d="M0 0 H7 L3.5 4 Z" fill="#f0f0f0"/></svg>
<svg style="left:773.5px;top:182px" width="22" height="22" viewBox="0 0 22 22"><path d="M10 11 L17 2.5 L20.5 5.5 L13.5 13.5 Z" fill="#f4b848"/><path d="M7.5 14 L10 11 L13.5 13.5 L11 16 Z" fill="#e0e0e0"/><rect x="0" y="15.5" width="21.5" height="5.5" fill="#f8e41e"/></svg>
<svg style="left:800.5px;top:192px" width="7" height="4" viewBox="0 0 7 4"><path d="M0 0 H7 L3.5 4 Z" fill="#f0f0f0"/></svg>
<div class="a" style="left:813px;top:179px;width:1px;height:28px;background:#3b3c40;"></div>
<div class="a" style="left:816.5px;top:178px;width:29px;height:30px;background:#76777a;border-radius:6px"></div>
<svg style="left:821px;top:183px" width="20" height="20" viewBox="0 0 20 20"><path d="M2.5 3.2 H12.5" stroke="#333436" stroke-width="2.2" stroke-linecap="round"/><path d="M2.5 7.6 H17.5" stroke="#333436" stroke-width="2.2" stroke-linecap="round"/><path d="M2.5 11.8 H14.5" stroke="#333436" stroke-width="2.2" stroke-linecap="round"/><path d="M2.5 16 H13.5" stroke="#333436" stroke-width="2.2" stroke-linecap="round"/></svg>
<svg style="left:849px;top:183px" width="20" height="20" viewBox="0 0 20 20"><path d="M4.5 3.2 H13.5" stroke="#4f5054" stroke-width="1.6" stroke-linecap="round"/><path d="M2 7.6 H16" stroke="#4f5054" stroke-width="1.6" stroke-linecap="round"/><path d="M3 11.8 H15" stroke="#4f5054" stroke-width="1.6" stroke-linecap="round"/><path d="M4 16 H14" stroke="#4f5054" stroke-width="1.6" stroke-linecap="round"/></svg>
<svg style="left:877px;top:183px" width="20" height="20" viewBox="0 0 20 20"><path d="M8 3.2 H18" stroke="#4f5054" stroke-width="1.6" stroke-linecap="round"/><path d="M4 7.6 H18" stroke="#4f5054" stroke-width="1.6" stroke-linecap="round"/><path d="M6 11.8 H18" stroke="#4f5054" stroke-width="1.6" stroke-linecap="round"/><path d="M6 16 H18" stroke="#4f5054" stroke-width="1.6" stroke-linecap="round"/></svg>
<svg style="left:906px;top:183px" width="20" height="20" viewBox="0 0 20 20"><path d="M2 3.2 H16" stroke="#4f5054" stroke-width="1.6" stroke-linecap="round"/><path d="M2 7.6 H16" stroke="#4f5054" stroke-width="1.6" stroke-linecap="round"/><path d="M2 11.8 H16" stroke="#4f5054" stroke-width="1.6" stroke-linecap="round"/><path d="M2 16 H16" stroke="#4f5054" stroke-width="1.6" stroke-linecap="round"/></svg>
<div class="a" style="left:933px;top:179px;width:1px;height:28px;background:#3b3c40;"></div>
<svg style="left:940px;top:184px" width="20" height="18" viewBox="0 0 20 18"><circle cx="2" cy="2.5" r="1.8" fill="#4a8ee8"/><circle cx="2" cy="10.5" r="1.8" fill="#4a8ee8"/><path d="M7 2.5 H17 M7 6.5 H11 M7 10.5 H17 M7 14.5 H11" stroke="#4f5054" stroke-width="1.5"/></svg>
<svg style="left:965.5px;top:192px" width="7" height="4" viewBox="0 0 7 4"><path d="M0 0 H7 L3.5 4 Z" fill="#f0f0f0"/></svg>
<svg style="left:977px;top:183px" width="20" height="20" viewBox="0 0 20 20"><text x="0" y="8.5" font-family="Liberation Sans" font-size="9" fill="#3d7ed8">1</text><text x="0" y="17.5" font-family="Liberation Sans" font-size="9.5" fill="#3d7ed8">2</text><path d="M7 3.5 H18 M7 7.5 H11 M7 12 H18 M7 16 H11" stroke="#4f5054" stroke-width="1.5"/></svg>
<svg style="left:1003.2px;top:192px" width="7" height="4" viewBox="0 0 7 4"><path d="M0 0 H7 L3.5 4 Z" fill="#f0f0f0"/></svg>
<svg style="left:1015px;top:183px" width="20" height="20" viewBox="0 0 20 20"><text x="0" y="8" font-family="Liberation Sans" font-size="8" fill="#3d7ed8">1</text><circle cx="4.5" cy="13.5" r="1.6" fill="#4a8ee8"/><path d="M7 3 H17.5 M7 7 H10.5 M9 12 H17.5 M9 16 H10" stroke="#4f5054" stroke-width="1.4"/></svg>
<svg style="left:1040.9px;top:192px" width="7" height="4" viewBox="0 0 7 4"><path d="M0 0 H7 L3.5 4 Z" fill="#f0f0f0"/></svg>
<div class="a" style="left:1053px;top:179px;width:1px;height:28px;background:#3b3c40;"></div>
<svg style="left:1062px;top:183px" width="20" height="20" viewBox="0 0 20 20"><path d="M0.5 7.5 H6 V4.5 L10.5 9.5 L6 14.5 V11.5 H0.5 Z" fill="#f08a3a"/><path d="M12 6.5 H18.5 M12 10.5 H18.5" stroke="#4f5054" stroke-width="1.5"/><path d="M3 2.5 H18 M3 15.5 H18" stroke="#3a3b3e" stroke-width="1"/></svg>
<svg style="left:1089px;top:183px" width="20" height="20" viewBox="0 0 20 20"><path d="M10.5 7.5 H5 V4.5 L0.5 9.5 L5 14.5 V11.5 H10.5 Z" fill="#f08a3a"/><path d="M12 6.5 H19 M12 10.5 H19" stroke="#4f5054" stroke-width="1.5"/><path d="M3 2.5 H18 M3 15.5 H18" stroke="#3a3b3e" stroke-width="1"/></svg>
<div class="a" style="left:1117px;top:179px;width:1px;height:28px;background:#3b3c40;"></div>
<svg style="left:1122.5px;top:183px" width="20" height="20" viewBox="0 0 20 20"><path d="M3.5 1 L6.5 4.5 H4.5 V14.5 H6.5 L3.5 18 L0.5 14.5 H2.5 V4.5 H0.5 Z" fill="#f08a3a"/><path d="M9 3.5 H19 M9 9.5 H19 M9 15.5 H19" stroke="#4f5054" stroke-width="1.6"/></svg>
<svg style="left:1149.2px;top:192px" width="7" height="4" viewBox="0 0 7 4"><path d="M0 0 H7 L3.5 4 Z" fill="#f0f0f0"/></svg>
<svg style="left:1163px;top:183px" width="20" height="20" viewBox="0 0 20 20"><path d="M3 4 L5.5 7 H0.5 Z M3 15 L5.5 12 H0.5 Z" fill="#f08a3a"/><rect x="2.3" y="6.5" width="1.4" height="6" fill="#f08a3a"/><path d="M8 2 H18 M8 5.5 H18 M8 13.5 H18 M8 17 H18" stroke="#4f5054" stroke-width="1.5"/></svg>
<svg style="left:1191px;top:182px" width="20" height="22" viewBox="0 0 20 22"><path d="M2.5 0.5 H6.5 V5 H8.5 L4.5 9.5 L0.5 5 H2.5 Z M2.5 21 H6.5 V16.5 H8.5 L4.5 12 L0.5 16.5 H2.5 Z" fill="#e6e6e6"/><rect x="9.5" y="2" width="9.5" height="2.3" fill="#e0e0e0"/><rect x="9.5" y="6" width="9.5" height="2.3" fill="#e0e0e0"/><rect x="9.5" y="13" width="9.5" height="2.3" fill="#e0e0e0"/><rect x="9.5" y="17" width="9.5" height="2.3" fill="#e0e0e0"/></svg>
<svg style="left:7px;top:218px" width="8" height="7" viewBox="0 0 8 7"><path d="M1.2 0.5 V5.5 H7" stroke="#f4f4f4" stroke-width="2" fill="none"/></svg>
<div class="a" style="left:443px;top:214px;width:63px;height:15px;background:#1c1d1f;border:1.5px solid #55565a;border-right:none;border-radius:1.5px 0 0 1.5px"></div>
<div class="a" style="left:1079px;top:214px;width:65px;height:15px;background:#1c1d1f;border:1.5px solid #55565a;border-radius:1.5px"></div>
<div class="a" style="left:443px;top:230px;width:701px;height:3px;background:#18191b;"></div>
<div class="t" style="left:587.5px;top:216.5px;font-size:8.8px;font-weight:700;color:#c4c4c4;width:7px;text-align:center">1</div>
<div class="t" style="left:669.8px;top:216.5px;font-size:8.8px;font-weight:700;color:#c4c4c4;width:7px;text-align:center">2</div>
<div class="t" style="left:752.1px;top:216.5px;font-size:8.8px;font-weight:700;color:#c4c4c4;width:7px;text-align:center">3</div>
<div class="t" style="left:834.4px;top:216.5px;font-size:8.8px;font-weight:700;color:#c4c4c4;width:7px;text-align:center">4</div>
<div class="t" style="left:916.7px;top:216.5px;font-size:8.8px;font-weight:700;color:#c4c4c4;width:7px;text-align:center">5</div>
<div class="t" style="left:999.0px;top:216.5px;font-size:8.8px;font-weight:700;color:#c4c4c4;width:7px;text-align:center">6</div>
<div class="t" style="left:1081.3px;top:216.5px;font-size:8.8px;font-weight:700;color:#c4c4c4;width:7px;text-align:center">7</div>
<svg style="left:0;top:0" width="1650" height="240"><rect x="447.0" y="218" width="1" height="5" fill="#6a6b6f"/><rect x="457.5" y="218" width="1" height="5" fill="#6a6b6f"/><rect x="467.5" y="217" width="1" height="7" fill="#737478"/><rect x="478.0" y="218" width="1" height="5" fill="#6a6b6f"/><rect x="488.0" y="218" width="1" height="5" fill="#6a6b6f"/><rect x="498.5" y="218" width="1" height="5" fill="#6a6b6f"/><rect x="519.0" y="218" width="1" height="5" fill="#6a6b6f"/><rect x="529.5" y="218" width="1" height="5" fill="#6a6b6f"/><rect x="539.5" y="218" width="1" height="5" fill="#6a6b6f"/><rect x="550.0" y="217" width="1" height="7" fill="#737478"/><rect x="560.0" y="218" width="1" height="5" fill="#6a6b6f"/><rect x="570.5" y="218" width="1" height="5" fill="#6a6b6f"/><rect x="580.5" y="218" width="1" height="5" fill="#6a6b6f"/><rect x="591.0" y="214" width="1" height="1" fill="#6a6b6f"/><rect x="601.5" y="218" width="1" height="5" fill="#6a6b6f"/><rect x="611.5" y="218" width="1" height="5" fill="#6a6b6f"/><rect x="622.0" y="218" width="1" height="5" fill="#6a6b6f"/><rect x="632.0" y="217" width="1" height="7" fill="#737478"/><rect x="642.5" y="218" width="1" height="5" fill="#6a6b6f"/><rect x="652.5" y="218" width="1" height="5" fill="#6a6b6f"/><rect x="663.0" y="218" width="1" height="5" fill="#6a6b6f"/><rect x="673.5" y="214" width="1" height="1" fill="#6a6b6f"/><rect x="683.5" y="218" width="1" height="5" fill="#6a6b6f"/><rect x="694.0" y="218" width="1" height="5" fill="#6a6b6f"/><rect x="704.0" y="218" width="1" height="5" fill="#6a6b6f"/><rect x="714.5" y="217" width="1" height="7" fill="#737478"/><rect x="724.5" y="218" width="1" height="5" fill="#6a6b6f"/><rect x="735.0" y="218" width="1" height="5" fill="#6a6b6f"/><rect x="745.5" y="218" width="1" height="5" fill="#6a6b6f"/><rect x="755.5" y="214" width="1" height="1" fill="#6a6b6f"/><rect x="766.0" y="218" width="1" height="5" fill="#6a6b6f"/><rect x="776.0" y="218" width="1" height="5" fill="#6a6b6f"/><rect x="786.5" y="218" width="1" height="5" fill="#6a6b6f"/><rect x="797.0" y="217" width="1" height="7" fill="#737478"/><rect x="807.0" y="218" width="1" height="5" fill="#6a6b6f"/><rect x="817.5" y="218" width="1" height="5" fill="#6a6b6f"/><rect x="827.5" y="218" width="1" height="5" fill="#6a6b6f"/><rect x="838.0" y="214" width="1" height="1" fill="#6a6b6f"/><rect x="848.0" y="218" width="1" height="5" fill="#6a6b6f"/><rect x="858.5" y="218" width="1" height="5" fill="#6a6b6f"/><rect x="869.0" y="218" width="1" height="5" fill="#6a6b6f"/><rect x="879.0" y="217" width="1" height="7" fill="#737478"/><rect x="889.5" y="218" width="1" height="5" fill="#6a6b6f"/><rect x="899.5" y="218" width="1" height="5" fill="#6a6b6f"/><rect x="910.0" y="218" width="1" height="5" fill="#6a6b6f"/><rect x="920.0" y="214" width="1" height="1" fill="#6a6b6f"/><rect x="930.5" y="218" width="1" height="5" fill="#6a6b6f"/><rect x="941.0" y="218" width="1" height="5" fill="#6a6b6f"/><rect x="951.0" y="218" width="1" height="5" fill="#6a6b6f"/><rect x="961.5" y="217" width="1" height="7" fill="#737478"/><rect x="971.5" y="218" width="1" height="5" fill="#6a6b6f"/><rect x="982.0" y="218" width="1" height="5" fill="#6a6b6f"/><rect x="992.0" y="218" width="1" height="5" fill="#6a6b6f"/><rect x="1002.5" y="214" width="1" height="1" fill="#6a6b6f"/><rect x="1013.0" y="218" width="1" height="5" fill="#6a6b6f"/><rect x="1023.0" y="218" width="1" height="5" fill="#6a6b6f"/><rect x="1033.5" y="218" width="1" height="5" fill="#6a6b6f"/><rect x="1043.5" y="217" width="1" height="7" fill="#737478"/><rect x="1054.0" y="218" width="1" height="5" fill="#6a6b6f"/><rect x="1064.0" y="218" width="1" height="5" fill="#6a6b6f"/><rect x="1074.5" y="218" width="1" height="5" fill="#6a6b6f"/><rect x="1085.0" y="214" width="1" height="1" fill="#6a6b6f"/><rect x="1095.0" y="218" width="1" height="5" fill="#6a6b6f"/><rect x="1105.5" y="218" width="1" height="5" fill="#6a6b6f"/><rect x="1115.5" y="218" width="1" height="5" fill="#6a6b6f"/><rect x="1126.0" y="217" width="1" height="7" fill="#737478"/><rect x="1136.0" y="218" width="1" height="5" fill="#6a6b6f"/></svg>
<svg style="left:547px;top:226px" width="5" height="4" viewBox="0 0 5 4"><rect x="2" y="0" width="1" height="2" fill="#e4e4e4"/><path d="M0 4 V3 Q0 2 1.5 2 H3.5 Q5 2 5 3 V4 Z" fill="#e4e4e4"/></svg>
<svg style="left:588px;top:226px" width="5" height="4" viewBox="0 0 5 4"><rect x="2" y="0" width="1" height="2" fill="#e4e4e4"/><path d="M0 4 V3 Q0 2 1.5 2 H3.5 Q5 2 5 3 V4 Z" fill="#e4e4e4"/></svg>
<svg style="left:628px;top:226px" width="5" height="4" viewBox="0 0 5 4"><rect x="2" y="0" width="1" height="2" fill="#e4e4e4"/><path d="M0 4 V3 Q0 2 1.5 2 H3.5 Q5 2 5 3 V4 Z" fill="#e4e4e4"/></svg>
<svg style="left:669px;top:226px" width="5" height="4" viewBox="0 0 5 4"><rect x="2" y="0" width="1" height="2" fill="#e4e4e4"/><path d="M0 4 V3 Q0 2 1.5 2 H3.5 Q5 2 5 3 V4 Z" fill="#e4e4e4"/></svg>
<svg style="left:709px;top:226px" width="5" height="4" viewBox="0 0 5 4"><rect x="2" y="0" width="1" height="2" fill="#e4e4e4"/><path d="M0 4 V3 Q0 2 1.5 2 H3.5 Q5 2 5 3 V4 Z" fill="#e4e4e4"/></svg>
<svg style="left:750px;top:226px" width="5" height="4" viewBox="0 0 5 4"><rect x="2" y="0" width="1" height="2" fill="#e4e4e4"/><path d="M0 4 V3 Q0 2 1.5 2 H3.5 Q5 2 5 3 V4 Z" fill="#e4e4e4"/></svg>
<svg style="left:790px;top:226px" width="5" height="4" viewBox="0 0 5 4"><rect x="2" y="0" width="1" height="2" fill="#e4e4e4"/><path d="M0 4 V3 Q0 2 1.5 2 H3.5 Q5 2 5 3 V4 Z" fill="#e4e4e4"/></svg>
<svg style="left:831px;top:226px" width="5" height="4" viewBox="0 0 5 4"><rect x="2" y="0" width="1" height="2" fill="#e4e4e4"/><path d="M0 4 V3 Q0 2 1.5 2 H3.5 Q5 2 5 3 V4 Z" fill="#e4e4e4"/></svg>
<svg style="left:871px;top:226px" width="5" height="4" viewBox="0 0 5 4"><rect x="2" y="0" width="1" height="2" fill="#e4e4e4"/><path d="M0 4 V3 Q0 2 1.5 2 H3.5 Q5 2 5 3 V4 Z" fill="#e4e4e4"/></svg>
<svg style="left:912px;top:226px" width="5" height="4" viewBox="0 0 5 4"><rect x="2" y="0" width="1" height="2" fill="#e4e4e4"/><path d="M0 4 V3 Q0 2 1.5 2 H3.5 Q5 2 5 3 V4 Z" fill="#e4e4e4"/></svg>
<svg style="left:952px;top:226px" width="5" height="4" viewBox="0 0 5 4"><rect x="2" y="0" width="1" height="2" fill="#e4e4e4"/><path d="M0 4 V3 Q0 2 1.5 2 H3.5 Q5 2 5 3 V4 Z" fill="#e4e4e4"/></svg>
<svg style="left:993px;top:226px" width="5" height="4" viewBox="0 0 5 4"><rect x="2" y="0" width="1" height="2" fill="#e4e4e4"/><path d="M0 4 V3 Q0 2 1.5 2 H3.5 Q5 2 5 3 V4 Z" fill="#e4e4e4"/></svg>
<svg style="left:1033px;top:226px" width="5" height="4" viewBox="0 0 5 4"><rect x="2" y="0" width="1" height="2" fill="#e4e4e4"/><path d="M0 4 V3 Q0 2 1.5 2 H3.5 Q5 2 5 3 V4 Z" fill="#e4e4e4"/></svg>
<svg style="left:504.2px;top:213px" width="9" height="16" viewBox="0 0 9 16"><path d="M0.8 0.8 H8.2 L5.2 7.5 L8.2 15.2 H0.8 L3.8 7.5 Z" fill="#222427" stroke="#eeeeee" stroke-width="1.4" stroke-linejoin="round"/></svg>
<svg style="left:1075px;top:221px" width="9" height="8" viewBox="0 0 9 8"><path d="M0.8 7.2 L4.5 1 L8.2 7.2 Z" fill="#222427" stroke="#eeeeee" stroke-width="1.4" stroke-linejoin="round"/></svg>
<svg style="left:720px;top:210px" width="15" height="23" viewBox="0 0 15 23"><path d="M1.2 1 V18.3 L5.2 14.5 L8.8 21.5 Q9.3 22.3 10.2 21.9 L11.3 21.3 Q12 20.9 11.6 20 L8.2 13.2 L13.6 12.6 Z" fill="#050505" stroke="#f4f4f4" stroke-width="1.3" stroke-linejoin="round"/></svg>
<div class="a" style="left:0px;top:233px;width:2px;height:637px;background:#161719;"></div>
<div class="a" style="left:443px;top:233px;width:701px;height:637px;background:#ffffff;"></div>
<div class="a" style="left:438px;top:233px;width:3px;height:637px;background:#27292a;"></div>
<div class="a" style="left:441px;top:233px;width:1px;height:637px;background:#5a5b5e;"></div>
<div class="a" style="left:442px;top:233px;width:1px;height:637px;background:#2a2b2e;"></div>
<div class="a" style="left:508px;top:261px;width:1px;height:12px;background:#c8c8c8;"></div>
<div class="a" style="left:497px;top:273px;width:11px;height:1px;background:#c8c8c8;"></div>
<div class="a" style="left:1078px;top:261px;width:1px;height:12px;background:#c8c8c8;"></div>
<div class="a" style="left:1078px;top:273px;width:11px;height:1px;background:#c8c8c8;"></div>
<div class="a" style="left:508px;top:273px;width:1px;height:15px;background:#2a2a2a;"></div>
<div class="a" style="left:4px;top:467px;width:5px;height:35px;background:#5cd0f8;border-radius:2.5px;box-shadow:0 0 0 1px #101214"></div>
<div class="a" style="left:1587px;top:210px;width:11px;height:660px;background:#1e1f21;"></div>
<div class="a" style="left:1589.5px;top:241px;width:7.5px;height:442px;background:#4a4b4e;border-radius:4px"></div>
<div class="a" style="left:1599px;top:210px;width:1px;height:660px;background:#56575b;"></div>
<div class="a" style="left:1599px;top:509px;width:7px;height:63px;background:#f4f4f4;"></div>
<svg style="left:1600px;top:537px" width="5" height="7" viewBox="0 0 5 7"><path d="M0 0 V7 L4.5 3.5 Z" fill="#222"/></svg>
<svg style="left:1618px;top:221px" width="14" height="12" viewBox="0 0 14 12"><path d="M0.5 1.5 H13.5 M0.5 6 H13.5 M0.5 10.5 H13.5" stroke="#f4f4f4" stroke-width="1.8"/></svg>
<svg style="left:1617px;top:257px" width="16" height="17" viewBox="0 0 16 17"><rect x="0.5" y="0.5" width="15" height="15.5" fill="#ececec"/><rect x="3" y="5.5" width="10" height="6" rx="3" fill="#3f86e0"/><circle cx="10" cy="8.5" r="2.2" fill="#f4f4f4"/></svg>
<svg style="left:1616px;top:293px" width="18" height="19" viewBox="0 0 18 19"><path d="M1 14 L5.5 1.5 L10 14 M2.8 9.5 H8.2" stroke="#6a6b6f" stroke-width="1.3" fill="none"/><path d="M8 15.5 L16.5 5" stroke="#e09a48" stroke-width="2"/><path d="M5.5 18.5 L8.5 15" stroke="#d060b0" stroke-width="2.5"/></svg>
<svg style="left:1615px;top:328px" width="20" height="18" viewBox="0 0 20 18"><path d="M1.5 3 L15 1.5 L16 5 L2.5 6 Z" fill="#5aa0e0"/><rect x="1" y="4" width="17" height="12" fill="#f0f0f0"/><rect x="2.5" y="5.5" width="14" height="9" fill="#5aaaf0"/><path d="M2.5 10.5 Q9 9 16.5 10.5 V14.5 H2.5 Z" fill="#f0b050"/><circle cx="7" cy="11.5" r="1" fill="#d03020"/></svg>
<svg style="left:1615px;top:363px" width="20" height="20" viewBox="0 0 20 20"><circle cx="10" cy="10" r="9" fill="#5d5e62"/><circle cx="10" cy="10" r="7" fill="#2e3a55"/><path d="M13.5 4.5 L11 11 L9 9 Z" fill="#e84030"/><path d="M6.5 15.5 L9 9 L11 11 Z" fill="#f0f0f0"/></svg>
<svg style="left:1617px;top:401px" width="16" height="18" viewBox="0 0 16 18"><rect x="0" y="0" width="16" height="18" fill="#e8e8e8"/></svg>
<svg style="left:1615px;top:436px" width="20" height="20" viewBox="0 0 20 20"><path d="M0.5 7 Q7.5 -1 14.5 7 Q7.5 13 0.5 7 Z" fill="#f4f4f4" stroke="#777" stroke-width="0.6"/><circle cx="7.5" cy="6.5" r="3" fill="#3a80d8"/><path d="M9 15 L18 6" stroke="#e09a48" stroke-width="2"/><path d="M6.5 18.5 L9.5 15" stroke="#d060b0" stroke-width="2.5"/></svg>
<svg style="left:1616px;top:472px" width="19" height="18" viewBox="0 0 19 18"><rect x="0.5" y="0.5" width="15" height="17" fill="#ececec" stroke="#999" stroke-width="0.6"/><path d="M3 4 H8 M3 7 H11 M3 10 H7 M3 13 H6" stroke="#d04040" stroke-width="1.1"/><path d="M6 17 L15.5 7" stroke="#f2b040" stroke-width="3.4"/><path d="M15 7.5 L17.5 5" stroke="#ee8fa0" stroke-width="3.4"/></svg>
<svg style="left:1617px;top:509px" width="19" height="19" viewBox="0 0 19 19"><rect x="0" y="0" width="14" height="17" fill="#e6e6e6"/><circle cx="12" cy="13.5" r="5.5" fill="#3a8ae6"/><circle cx="12" cy="10.5" r="1" fill="#fff"/><path d="M9.5 12 H14.5 M12 12 V14.5 L10.5 17 M12 14.5 L13.5 17" stroke="#fff" stroke-width="1"/></svg>
<svg style="left:1616px;top:544px" width="18" height="18" viewBox="0 0 18 18"><circle cx="7" cy="7" r="5.5" fill="#2a2b2e" stroke="#606166" stroke-width="2"/><path d="M11 11 L16 16" stroke="#a07c5c" stroke-width="2.4"/></svg>
<div class="a" style="left:0px;top:869px;width:1650px;height:1px;background:#1c1d1f;"></div>
<div class="a" style="left:0px;top:870px;width:1650px;height:2px;background:#46474a;"></div>
<div class="a" style="left:0px;top:872px;width:1647px;height:20px;background:#202124;"></div>
<div class="a" style="left:0px;top:892px;width:1650px;height:2px;background:#050505;"></div>
<div class="a" style="left:41px;top:893px;width:250px;height:1px;background:#3c3c3c;"></div>
<div class="a" style="left:267px;top:893px;width:21px;height:1px;background:#b05a28;"></div>
<div class="a" style="left:443px;top:869px;width:701px;height:2px;background:#ffffff;"></div>
<div class="a" style="left:1647px;top:873px;width:3px;height:19px;background:#1a73e8;"></div>
<svg style="left:10px;top:876px" width="13" height="13" viewBox="0 0 13 13"><rect x="0" y="0" width="9" height="11" fill="#e4e4e4"/><path d="M2 5 H7 M4.5 2.5 V8" stroke="#777" stroke-width="1"/><circle cx="8.5" cy="8.5" r="4" fill="#e03a2e"/></svg>
<div class="a" style="left:27.5px;top:874px;width:1px;height:15px;background:#3a3b3f;"></div>
<div class="a" style="left:243.5px;top:874px;width:1px;height:15px;background:#3a3b3f;"></div>
<div class="a" style="left:574.5px;top:874px;width:1px;height:15px;background:#3a3b3f;"></div>
<div class="a" style="left:614.5px;top:874px;width:1px;height:15px;background:#3a3b3f;"></div>
<div class="a" style="left:870.5px;top:874px;width:1px;height:15px;background:#3a3b3f;"></div>
<div class="a" style="left:1105px;top:874px;width:1px;height:15px;background:#3a3b3f;"></div>
<div class="a" style="left:1163.5px;top:874px;width:1px;height:15px;background:#3a3b3f;"></div>
<div class="a" style="left:1203.5px;top:874px;width:1px;height:15px;background:#3a3b3f;"></div>
<div class="a" style="left:1228.5px;top:874px;width:1px;height:15px;background:#3a3b3f;"></div>
<div class="a" style="left:1406.5px;top:874px;width:1px;height:15px;background:#3a3b3f;"></div>
<div class="a" style="left:1482.5px;top:874px;width:1px;height:15px;background:#3a3b3f;"></div>
<div class="a" style="left:1606px;top:874px;width:1px;height:15px;background:#3a3b3f;"></div>
<div class="t" style="left:35.5px;top:878px;font-size:10.1px;font-weight:400;color:#dedede;-webkit-text-stroke:0.2px #dedede">Page 1 of 1</div>
<div class="t" style="left:251.5px;top:878px;font-size:10.65px;font-weight:400;color:#dedede;-webkit-text-stroke:0.2px #dedede">Selected: 10 words, 51 characters</div>
<div class="t" style="left:622.7px;top:878px;font-size:10.46px;font-weight:400;color:#dedede;-webkit-text-stroke:0.2px #dedede">Default Page Style</div>
<div class="t" style="left:956.5px;top:878px;font-size:10.19px;font-weight:400;color:#dedede;-webkit-text-stroke:0.2px #dedede">English (USA)</div>
<div class="t" style="left:1613px;top:878px;font-size:10.17px;font-weight:400;color:#dedede;-webkit-text-stroke:0.2px #dedede">100%</div>
<svg style="left:1175px;top:875px" width="19" height="15" viewBox="0 0 19 15"><path d="M1 1 H7 M4 1 V13 M1 13 H7" stroke="#e0e0e0" stroke-width="1.6"/><path d="M9 9 V13 H18 V9" stroke="#e0e0e0" stroke-width="1.5" fill="none"/></svg>
<svg style="left:1414px;top:875px" width="11" height="14" viewBox="0 0 11 14"><path d="M0 0 H10 V10 L6.5 13.5 H0 Z" fill="#f08a3a"/><path d="M6.5 13.5 V10 H10" fill="#c05a20"/></svg>
<svg style="left:1430px;top:876px" width="21" height="13" viewBox="0 0 21 13"><path d="M0 0 H9 V9 L6 12.5 H0 Z M11 0 H20 V9 L17 12.5 H11 Z" fill="#dcdcdc"/></svg>
<svg style="left:1456.5px;top:876px" width="21" height="13" viewBox="0 0 21 13"><path d="M0 0 H9 V12.5 H3 L0 9.5 Z M11 0 H20 V9.5 L17 12.5 H11 Z" fill="#dcdcdc"/></svg>
<svg style="left:1489px;top:877px" width="10" height="10" viewBox="0 0 10 10"><circle cx="5" cy="5" r="5" fill="#d8d8d8"/><path d="M2.5 5 H7.5" stroke="#1d1e21" stroke-width="1.4"/></svg>
<div class="a" style="left:1503px;top:881.5px;width:84px;height:1px;background:#cfcfcf;"></div>
<div class="a" style="left:1527px;top:879px;width:1px;height:6px;background:#cfcfcf;"></div>
<svg style="left:1540px;top:878px" width="8" height="8" viewBox="0 0 8 8"><circle cx="4" cy="4" r="3.5" fill="#bdbdbd" stroke="#eee" stroke-width="0.8"/></svg>
<svg style="left:1591px;top:877px" width="10" height="10" viewBox="0 0 10 10"><circle cx="5" cy="5" r="5" fill="#d8d8d8"/><path d="M2.5 5 H7.5 M5 2.5 V7.5" stroke="#1d1e21" stroke-width="1.4"/></svg>
</body></html>
